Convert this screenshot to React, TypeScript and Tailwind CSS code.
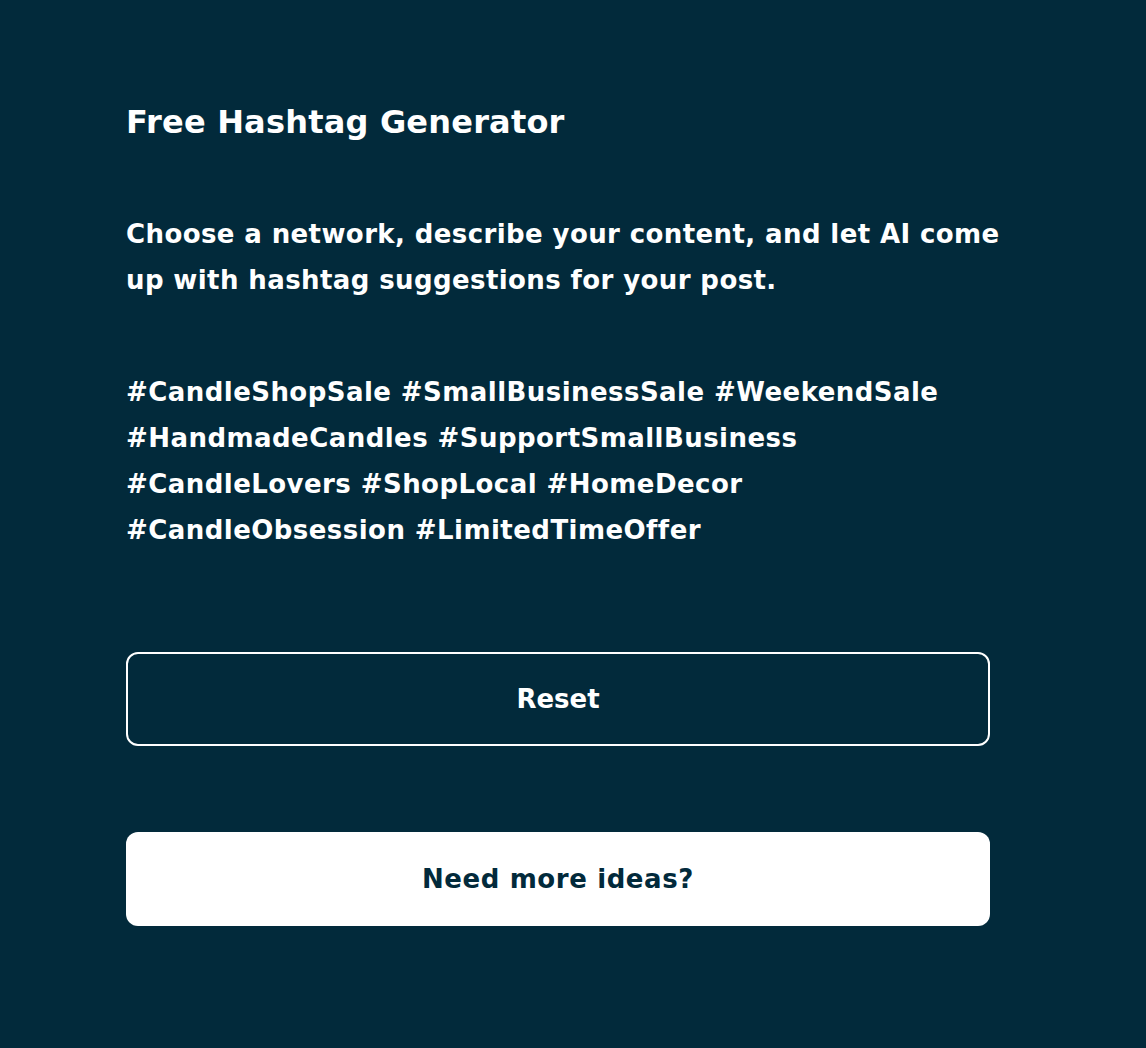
export default function App() {
  return (
    <div
      className="min-h-[1048px] w-full bg-[#022a3b] text-white"
      style={{ fontFamily: '"DejaVu Sans", "Liberation Sans", sans-serif' }}
    >
      <div className="ml-[126px] w-[864px] pt-[98px]">
        <h1 className="text-[32px] font-bold leading-[48px] tracking-[0.2px]">Free Hashtag Generator</h1>

        <p className="mt-[65px] w-[900px] text-[26px] font-bold leading-[46px] tracking-[0.4px]">
          Choose a network, describe your content, and let AI come
          <br />
          up with hashtag suggestions for your post.
        </p>

        <p className="mt-[66px] w-[900px] text-[26px] font-bold leading-[46px] tracking-[0.45px]">
          #CandleShopSale #SmallBusinessSale #WeekendSale
          <br />
          #HandmadeCandles #SupportSmallBusiness
          <br />
          #CandleLovers #ShopLocal #HomeDecor
          <br />
          #CandleObsession #LimitedTimeOffer
        </p>

        <button className="mt-[99px] flex h-[94px] w-full items-center justify-center rounded-[12px] border-2 border-white text-[26px] font-bold">
          Reset
        </button>

        <button className="mt-[86px] flex h-[94px] w-full items-center justify-center rounded-[12px] bg-white text-[26px] font-bold tracking-[0.6px] text-[#022a3b]">
          Need more ideas?
        </button>
      </div>
    </div>
  );
}
